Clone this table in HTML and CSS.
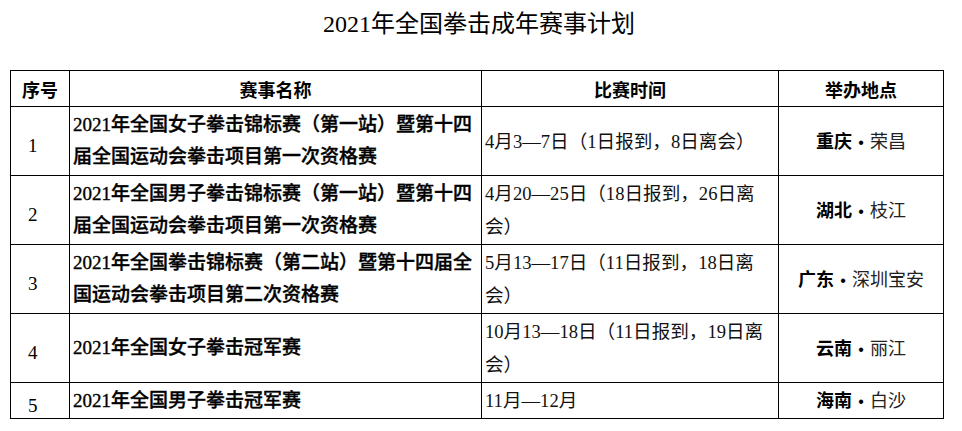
FILE: index.html
```html
<!DOCTYPE html>
<html lang="zh-CN">
<head>
<meta charset="utf-8">
<title>2021年全国拳击成年赛事计划</title>
<link rel="stylesheet" href="styles.css">
</head>
<body>
<h1 class="title">2021年全国拳击成年赛事计划</h1>
<table class="plan">
  <colgroup>
    <col class="c-no">
    <col class="c-name">
    <col class="c-date">
    <col class="c-place">
  </colgroup>
  <thead>
    <tr class="head">
      <th>序号</th>
      <th>赛事名称</th>
      <th>比赛时间</th>
      <th>举办地点</th>
    </tr>
  </thead>
  <tbody>
    <tr class="tall">
      <td class="no">1</td>
      <td class="name">2021年全国女子拳击锦标赛（第一站）暨第十四届全国运动会拳击项目第一次资格赛</td>
      <td class="date">4月3—7日（1日报到，8日离会）</td>
      <td class="place"><span class="prov">重庆</span><span class="dot">•</span><span class="city">荣昌</span></td>
    </tr>
    <tr class="tall">
      <td class="no">2</td>
      <td class="name">2021年全国男子拳击锦标赛（第一站）暨第十四届全国运动会拳击项目第一次资格赛</td>
      <td class="date">4月20—25日（18日报到，26日离会）</td>
      <td class="place"><span class="prov">湖北</span><span class="dot">•</span><span class="city">枝江</span></td>
    </tr>
    <tr class="tall">
      <td class="no">3</td>
      <td class="name">2021年全国拳击锦标赛（第二站）暨第十四届全国运动会拳击项目第二次资格赛</td>
      <td class="date">5月13—17日（11日报到，18日离会）</td>
      <td class="place"><span class="prov">广东</span><span class="dot">•</span><span class="city">深圳宝安</span></td>
    </tr>
    <tr class="tall">
      <td class="no">4</td>
      <td class="name">2021年全国女子拳击冠军赛</td>
      <td class="date">10月13—18日（11日报到，19日离会）</td>
      <td class="place"><span class="prov">云南</span><span class="dot">•</span><span class="city">丽江</span></td>
    </tr>
    <tr class="short">
      <td class="no">5</td>
      <td class="name">2021年全国男子拳击冠军赛</td>
      <td class="date">11月—12月</td>
      <td class="place"><span class="prov">海南</span><span class="dot">•</span><span class="city">白沙</span></td>
    </tr>
  </tbody>
</table>
</body>
</html>
```

FILE: styles.css
```css
html, body {
  margin: 0;
  padding: 0;
  background: #ffffff;
}

body {
  padding: 0 10px;
  color: #000000;
  font-family: "Liberation Serif", "Noto Sans CJK SC", serif;
}

.title {
  margin: 8px 0 0 0;
  height: 32px;
  line-height: 32px;
  font-size: 24px;
  font-weight: 400;
  text-align: center;
  padding-right: 4px;
}

.plan {
  margin-top: 30px;
  border-collapse: collapse;
  table-layout: fixed;
  width: 933px;
}

.c-no { width: 59px; }
.c-name { width: 412px; }
.c-date { width: 297px; }
.c-place { width: 165px; }

.plan th,
.plan td {
  border: 1px solid #000000;
  padding: 0 3px;
  vertical-align: middle;
}

.plan .head { height: 36px; }

.plan .head th {
  font-size: 18px;
  font-weight: 700;
  font-family: "Noto Sans CJK SC", sans-serif;
  text-align: center;
  line-height: 24px;
}

.plan .tall { height: 69px; }
.plan .short { height: 36px; }

.plan .no {
  text-align: left;
  padding-left: 17px;
  padding-top: 10px;
  font-size: 19px;
  line-height: 24px;
}

.plan .name {
  font-size: 19px;
  line-height: 32px;
  font-weight: 500;
  text-align: left;
  -webkit-text-stroke: 0.35px #000000;
}

.plan .date {
  font-size: 18.6px;
  line-height: 33px;
  font-weight: 400;
  text-align: left;
  color: #111111;
}

.plan .place {
  text-align: center;
  font-size: 18px;
  line-height: 24px;
  font-family: "Noto Sans CJK SC", sans-serif;
}

.prov { font-weight: 700; }

.dot {
  display: inline-block;
  width: 18px;
  text-align: center;
  font-family: "Liberation Sans", sans-serif;
  font-size: 16px;
}

.city {
  font-weight: 400;
  color: #222222;
}
```
